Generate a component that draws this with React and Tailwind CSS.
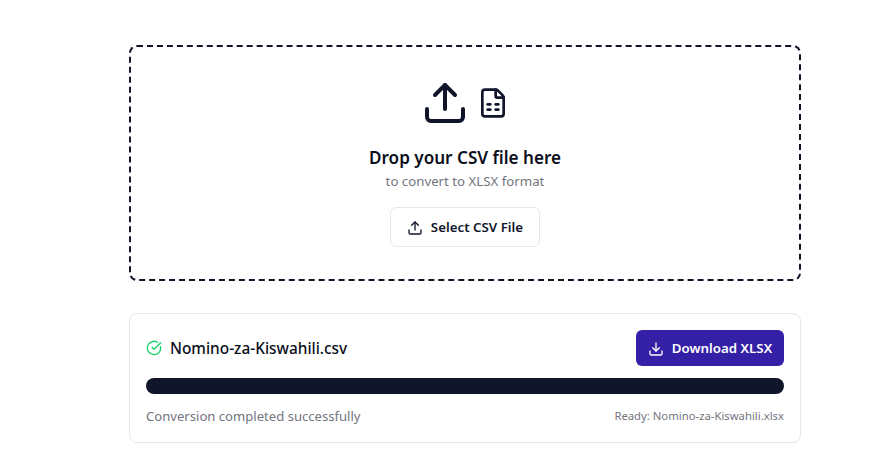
import { CircleCheckBig, Download, FileSpreadsheet, Upload } from 'lucide-react';

export default function App() {
  return (
    <div className="min-h-screen bg-white pt-[45px] pl-[129px] font-['Noto_Sans',sans-serif]">
      <div className="w-[672px] space-y-8">
        {/* Drop zone */}
        <div className="h-[236px] rounded-lg border-2 border-dashed border-[#10152a] flex flex-col items-center pt-[32px]">
          <div className="flex items-center gap-2 text-[#10152a]">
            <Upload size={48} strokeWidth={2} />
            <FileSpreadsheet size={32} strokeWidth={2} />
          </div>
          <h3 className="mt-[17px] text-[17.1px] leading-7 font-semibold text-[#0b0f1c]">Drop your CSV file here</h3>
          <p className="-mt-px text-[13.25px] leading-5 text-[#737680]">to convert to XLSX format</p>
          <button className="mt-4 h-10 w-[150px] pt-px rounded-md border border-[#e5e7eb] bg-white flex items-center justify-center gap-2 text-[13.3px] font-semibold text-[#10152a]">
            <Upload size={16} />
            Select CSV File
          </button>
        </div>

        {/* Converted file */}
        <div className="h-[130px] rounded-lg border border-[#e5e7eb] bg-white px-4 pt-4">
          <div className="flex items-center justify-between">
            <div className="flex items-center gap-2">
              <CircleCheckBig size={16} className="text-[#15d46b]" />
              <span className="pt-px text-[15.4px] font-medium text-[#0b0f1c]">Nomino-za-Kiswahili.csv</span>
            </div>
            <button className="h-9 w-[148px] pt-px rounded-md bg-[#3420a6] flex items-center justify-center gap-2 text-[13.3px] font-semibold text-white">
              <Download size={16} />
              Download XLSX
            </button>
          </div>
          <div className="mt-3 h-4 rounded-full bg-[#10152a]" />
          <div className="mt-[12px] flex items-center justify-between">
            <span className="text-[13.1px] leading-5 text-[#737680]">Conversion completed successfully</span>
            <span className="text-[11.3px] leading-5 text-[#737680]">Ready: Nomino-za-Kiswahili.xlsx</span>
          </div>
        </div>
      </div>
    </div>
  );
}
